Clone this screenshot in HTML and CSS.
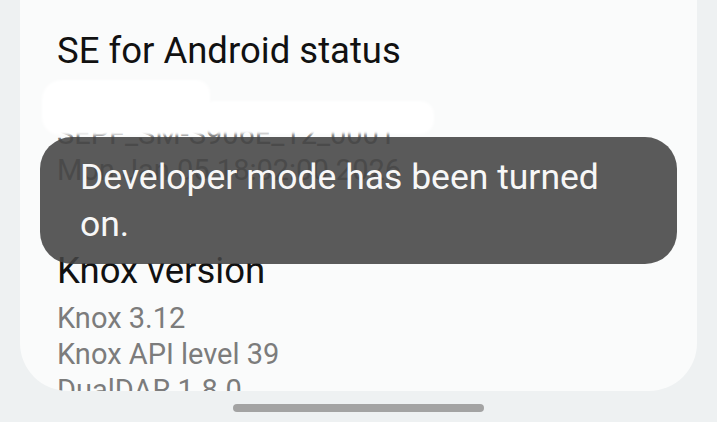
FILE: index.html
```html
<!DOCTYPE html>
<html lang="en">
<head>
    <title>Software information</title>
    <meta name="viewport" content="width=device-width, initial-scale=1.0">
    <link rel="stylesheet" href="styles.css">
</head>
<body>

    <div class="screen">
        <div class="card">
            <div class="section">
                <h2 class="section-title">SE for Android status</h2>
                <p class="info-line">Enforcing</p>
                <p class="info-line">SEPF_SM-S906E_12_0001</p>
                <p class="info-line">Mon Jan 05 18:02:00 2026</p>
            </div>
            <div class="section">
                <h2 class="section-title">Knox version</h2>
                <p class="info-line">Knox 3.12</p>
                <p class="info-line">Knox API level 39</p>
                <p class="info-line">DualDAR 1.8.0</p>
            </div>
        </div>
        <div class="home-bar"></div>

        <!-- hidden build strings -->
        <div class="redact redact-one"></div>
        <div class="redact redact-two"></div>

        <div class="toast">Developer mode has been turned on.</div>
    </div>

</body>
</html>
```

FILE: styles.css
```css
body {
    margin: 0;
    background-color: #eef1f2;
    font-family: Roboto, "Noto Sans", sans-serif;
    overflow: hidden;
}

.screen {
    position: relative;
    display: flex;
    flex-direction: column;
    height: 422px;
    padding: 0 20px;
    box-sizing: border-box;
}

.card {
    margin-top: -40px;
    height: 431px;
    flex-shrink: 0;
    padding: 68px 37px 0;
    box-sizing: border-box;
    background-color: #fafbfb;
    border-radius: 0 0 48px 48px;
    overflow: hidden;
}

.section {
    margin-bottom: 60px;
}

.section-title {
    margin: 0 0 6px;
    font-size: 36.5px;
    line-height: 46px;
    font-weight: 400;
    color: #111;
}

.info-line {
    margin: 0;
    font-size: 29px;
    line-height: 36px;
    color: #7c7c7c;
}

.home-bar {
    flex-shrink: 0;
    width: 251px;
    height: 8px;
    margin: 13px auto 0;
    border-radius: 4px;
    background-color: #a3a3a3;
}

.redact {
    position: absolute;
    background-color: #fff;
    filter: blur(1.5px);
}

.redact-one {
    left: 42px;
    top: 80px;
    width: 168px;
    height: 55px;
    border-radius: 20px 14px 10px 18px;
}

.redact-two {
    left: 200px;
    top: 101px;
    width: 234px;
    height: 33px;
    border-radius: 14px;
}

.toast {
    position: absolute;
    left: 40px;
    top: 137px;
    width: 637px;
    height: 127px;
    padding: 17px 60px 0 40px;
    box-sizing: border-box;
    border-radius: 32px;
    background-color: rgba(67, 67, 67, 0.88);
    color: #f7f7f7;
    font-size: 35.5px;
    line-height: 47px;
}
```
